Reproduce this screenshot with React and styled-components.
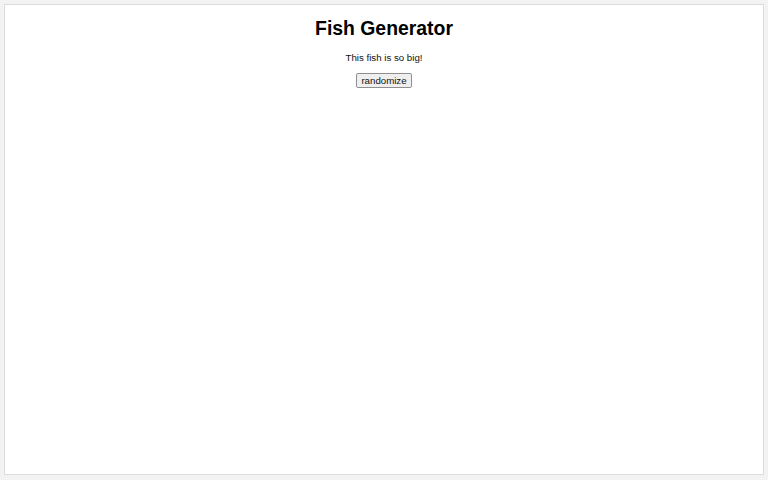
import React, { useState } from 'react';
import styled, { createGlobalStyle } from 'styled-components';

const GlobalStyle = createGlobalStyle`
  html, body {
    margin: 0;
    height: 100%;
    background: #f3f3f3;
  }
  #root {
    height: 100%;
  }
`;

const Page = styled.div`
  box-sizing: border-box;
  height: 100%;
  padding: 4px 4px 5px 4px;
`;

const Card = styled.div`
  box-sizing: border-box;
  height: 100%;
  background: #fff;
  border: 1px solid #dcdcdc;
  display: flex;
  flex-direction: column;
  align-items: center;
  font-family: "Liberation Sans", Arial, sans-serif;
  color: #000;
`;

const Title = styled.h1`
  margin: 11px 0 0;
  font-size: 19.4px;
  font-weight: bold;
  line-height: 24px;
`;

const Caption = styled.p`
  margin: 12px 0 0;
  font-size: 9.7px;
  line-height: 12px;
  color: #111;
`;

const Button = styled.button`
  margin-top: 9px;
  font-family: "Liberation Sans", Arial, sans-serif;
  font-size: 9.7px;
  line-height: 12px;
  padding: 0 4px;
  height: 15px;
  background: #efefef;
  border: 1px solid #8f8f8f;
  border-radius: 2px;
  color: #111;
`;

const sizes = ['so big', 'so small', 'huge', 'tiny', 'enormous'];

const App = () => {
  const [size, setSize] = useState(0);

  return (
    <>
      <GlobalStyle />
      <Page>
        <Card>
          <Title>Fish Generator</Title>
          <Caption>This fish is {sizes[size]}!</Caption>
          <Button onClick={() => setSize((size + 1) % sizes.length)}>randomize</Button>
        </Card>
      </Page>
    </>
  );
};

export default App;
